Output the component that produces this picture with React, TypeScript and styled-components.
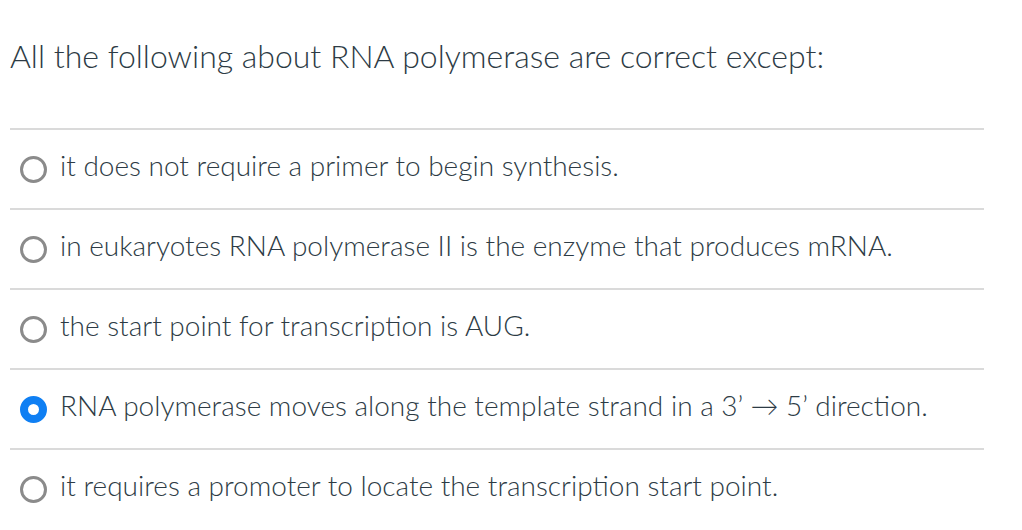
import React from "react";
import styled, { createGlobalStyle } from "styled-components";

const colors = {
  text: "#2d3b45",
  rule: "#dadada",
  radio: "#8b8b8b",
  blue: "#0f7ff3",
};

const GlobalStyle = createGlobalStyle`
  html, body {
    margin: 0;
    background: #ffffff;
  }
  body {
    font-family: Lato, "Open Sans", sans-serif;
    font-weight: 300;
    color: ${colors.text};
  }
`;

interface AnswerProps {
  selected?: boolean;
}

const answers = [
  "it does not require a primer to begin synthesis.",
  "in eukaryotes RNA polymerase II is the enzyme that produces mRNA.",
  "the start point for transcription is AUG.",
  "RNA polymerase moves along the template strand in a 3\u2019 \u2192 5\u2019 direction.",
  "it requires a promoter to locate the transcription start point.",
];

const Answer: React.FC<React.PropsWithChildren<AnswerProps>> = (props) => {
  return (
    <Row>
      <Radio selected={props.selected} />
      <Label>{props.children}</Label>
    </Row>
  );
};

const App: React.FC = () => {
  return (
    <Page>
      <GlobalStyle />
      <Question>All the following about RNA polymerase are correct except:</Question>
      <List>
        {answers.map((a, i) => (
          <Answer key={i} selected={i === 3}>
            {a}
          </Answer>
        ))}
      </List>
    </Page>
  );
};

const Page = styled.div`
  width: 974px;
  padding: 0 38px 0 10px;
`;

const Question = styled.h1`
  margin: 0;
  height: 128px;
  padding-top: 36px;
  box-sizing: border-box;
  font-size: 32px;
  font-weight: 300;
  line-height: 40px;
`;

const List = styled.ul`
  list-style: none;
  margin: 0;
  padding: 0;
`;

const Row = styled.li`
  display: flex;
  align-items: center;
  gap: 13px;
  height: 78px;
  padding-left: 10px;
  border-top: 2px solid ${colors.rule};
`;

const Radio = styled.span<AnswerProps>`
  flex: none;
  box-sizing: border-box;
  width: 27px;
  height: 27px;
  margin-top: 1px;
  border-radius: 50%;
  background: #ffffff;
  border: ${(p) => (p.selected ? `8px solid ${colors.blue}` : `3px solid ${colors.radio}`)};
`;

const Label = styled.span`
  font-size: 28px;
  line-height: 34px;
  padding-bottom: 8px;
`;

export default App;
